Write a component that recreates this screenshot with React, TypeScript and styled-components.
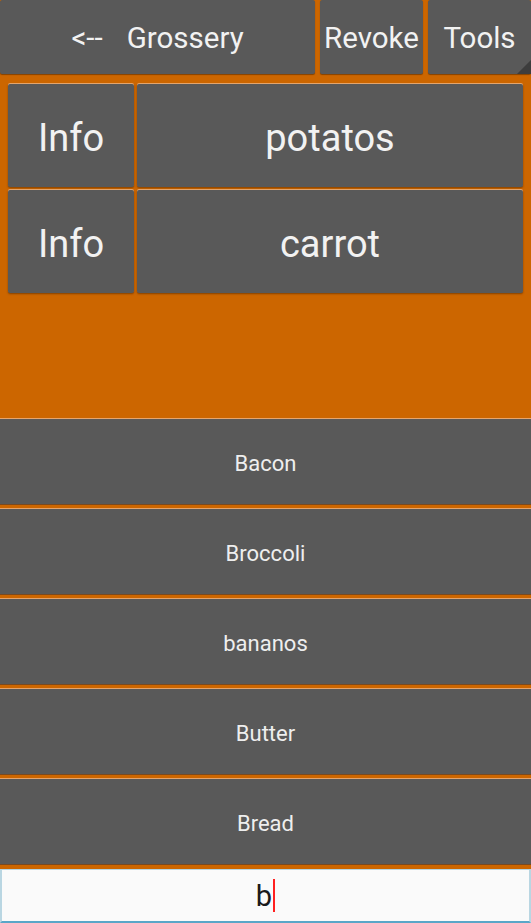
import { FC } from "react";
import styled, { createGlobalStyle } from "styled-components";

const ORANGE = "#cc6600";
const GRAY = "#595959";

const GlobalStyle = createGlobalStyle`
  html, body {
    margin: 0;
    padding: 0;
    background: ${ORANGE};
  }
  * {
    box-sizing: border-box;
  }
`;

const Screen = styled.div`
  width: 531px;
  height: 923px;
  display: flex;
  flex-direction: column;
  background: ${ORANGE};
  font-family: Roboto, "Noto Sans", sans-serif;
  color: #f2f2f2;
  overflow: hidden;
`;

const TopBar = styled.div`
  height: 75px;
  display: flex;
  gap: 5px;
  padding-bottom: 1px;
`;

const BarButton = styled.div<{ $w: number; $corner?: boolean }>`
  position: relative;
  width: ${(p) => p.$w}px;
  flex: 0 0 auto;
  display: flex;
  align-items: center;
  justify-content: center;
  gap: 24px;
  padding-top: 2px;
  background: ${GRAY};
  border-radius: 2px;
  box-shadow: 0 1px 1px rgba(60, 30, 0, 0.5);
  font-size: 29.5px;
  white-space: pre;

  ${(p) =>
    p.$corner &&
    `
    &::after {
      content: "";
      position: absolute;
      right: 0;
      bottom: 0;
      border-style: solid;
      border-width: 0 0 14px 14px;
      border-color: transparent transparent #3d3d3d transparent;
    }
  `}
`;

const Panel = styled.div`
  height: 343px;
  padding: 9px 8px 0 8px;
  display: flex;
  flex-direction: column;
  gap: 3px;
`;

const ItemRow = styled.div`
  height: 103px;
  display: flex;
  gap: 3px;
`;

const ItemButton = styled.div<{ $w?: number }>`
  ${(p) => (p.$w ? `width: ${p.$w}px; flex: 0 0 auto;` : "flex: 1;")}
  display: flex;
  align-items: center;
  justify-content: center;
  padding-top: 5px;
  background: ${GRAY};
  border-radius: 2px;
  box-shadow: 0 -1px 0 #e3a56d, 0 1px 2px rgba(70, 35, 0, 0.55);
  font-size: 38px;
`;

const List = styled.div`
  display: flex;
  flex-direction: column;
`;

const ListRow = styled.div`
  height: 90px;
  display: flex;
  align-items: center;
  justify-content: center;
  padding-top: 2px;
  background: ${GRAY};
  border-top: 1px solid #e6a56c;
  border-bottom: 3px solid ${ORANGE};
  box-shadow: inset 0 -1px 0 #7a4a20;
  font-size: 22px;
  color: #eeeeee;
`;

const InputBox = styled.div`
  flex: 1;
  margin-top: 1px;
  display: flex;
  align-items: center;
  justify-content: center;
  background: #fafafa;
  border: 1px solid #b9d6e2;
  border-left-width: 2px;
  border-right-width: 2px;
  border-bottom: 2px solid #5aa6c8;
  color: #1a1a1a;
  font-size: 29px;
`;

const Caret = styled.span`
  display: inline-block;
  width: 2px;
  height: 33px;
  margin-left: 1px;
  background: #ff2020;
`;

const items = ["potatos", "carrot"];
const suggestions = ["Bacon", "Broccoli", "bananos", "Butter", "Bread"];

const App: FC = () => {
  return (
    <Screen>
      <GlobalStyle />
      <TopBar>
        <BarButton $w={315}>
          <span>{"<--"}</span>
          <span>Grossery</span>
        </BarButton>
        <BarButton $w={103}>Revoke</BarButton>
        <BarButton $w={103} $corner>
          Tools
        </BarButton>
      </TopBar>
      <Panel>
        {items.map((name) => (
          <ItemRow key={name}>
            <ItemButton $w={126}>Info</ItemButton>
            <ItemButton>{name}</ItemButton>
          </ItemRow>
        ))}
      </Panel>
      <List>
        {suggestions.map((s) => (
          <ListRow key={s}>{s}</ListRow>
        ))}
      </List>
      <InputBox>
        b<Caret />
      </InputBox>
    </Screen>
  );
};

export default App;
